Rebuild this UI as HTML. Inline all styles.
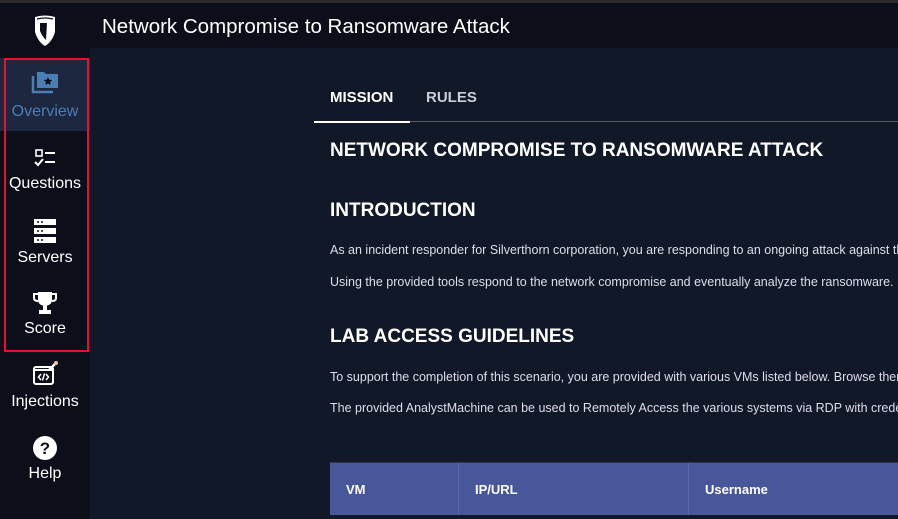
<!DOCTYPE html>
<html><head><meta charset="utf-8"><style>
*{margin:0;padding:0;box-sizing:border-box}
body{width:898px;height:519px;overflow:hidden;background:#111827;font-family:"Liberation Sans",Arial,sans-serif;color:#fff;position:relative}
.topline{position:absolute;left:0;top:0;width:898px;height:3px;background:#2b2b2e}
.side{position:absolute;left:0;top:3px;width:90px;height:516px;background:#0c0f1a}
.head{position:absolute;left:90px;top:3px;width:808px;height:45px;background:#0c0f1a}
.head span{position:absolute;left:12px;top:12px;font-size:20.5px;color:#fff}
.item{position:absolute;left:0;width:90px;text-align:center;font-size:16px;color:#fff}
.item svg{display:block;margin:0 auto 5px}
.ov{background:#1d2740;color:#4a7fb5}
.red{position:absolute;left:4px;top:58px;width:85px;height:294px;border:2px solid #e8112d}
.tabs{position:absolute;left:314px;top:88px;width:584px;height:34px;border-bottom:1px solid #555b66}
.tab{position:absolute;top:1px;font-size:15px;font-weight:bold}
.ul{position:absolute;left:0;bottom:-2px;width:96px;height:2px;background:#fff}
h1,h2{position:absolute;left:330px;font-size:19px;font-weight:bold}
p{position:absolute;left:330px;width:568px;overflow:hidden;font-size:12.5px;color:#dde;white-space:nowrap}
.tbl{position:absolute;left:330px;top:462px;width:568px;height:53px;background:#47579a;border-top:1px solid #2e3650;overflow:hidden}
.tbl div{position:absolute;top:0;height:53px;line-height:53px;font-size:13px;font-weight:bold;border-left:1px solid #5a68a5;padding-left:16px}
</style></head><body>
<div class="topline"></div>
<div class="side"></div>
<div class="head"><span>Network Compromise to Ransomware Attack</span></div>
<svg style="position:absolute;left:32px;top:14px" width="26" height="34" viewBox="0 0 26 34"><path d="M3 3 Q13 0 23 3 L23 18 Q20 28 13 32 Q6 28 3 18 Z" fill="#fff"/><path d="M8 9 L15 9 L14 26 Q10 22 8 17 Z" fill="#0c0f1a"/><path d="M5 5 Q13 3 21 5" stroke="#0c0f1a" stroke-width="1.2" fill="none"/></svg>
<div class="item ov" style="top:58px;height:73px;padding-top:12px"><svg width="28" height="24" viewBox="0 0 28 24"><path d="M2 6 V22 H22" stroke="#4a7fb5" stroke-width="2.5" fill="none"/><path d="M6 2 H13 L15 4 H27 V18 H6 Z" fill="#4a7fb5"/><path d="M17 7 l1.3 2.7 3 .3 -2.2 2 .6 3 -2.7-1.5 -2.7 1.5 .6-3 -2.2-2 3-.3z" fill="#0c0f1a"/></svg><span style="position:relative;top:4px">Overview</span></div>
<div class="item" style="top:148px"><svg width="24" height="22" viewBox="0 0 24 22"><rect x="3" y="2" width="6" height="6" fill="none" stroke="#fff" stroke-width="1.6"/><path d="M12 5 H22 M12 14 H22" stroke="#fff" stroke-width="2"/><path d="M2 14 L5 17 L10 11" stroke="#fff" stroke-width="2" fill="none"/></svg>Questions</div>
<div class="item" style="top:218px"><svg width="22" height="26" viewBox="0 0 22 26"><rect x="0" y="1" width="22" height="6" fill="#fff"/><rect x="0" y="10" width="22" height="6" fill="#fff"/><rect x="0" y="19" width="22" height="6" fill="#fff"/><path d="M3 4h2M7 4h2M3 13h2M7 13h2M3 22h2M7 22h2" stroke="#0c0f1a" stroke-width="1.5"/></svg>Servers</div>
<div class="item" style="top:291px"><svg width="24" height="24" viewBox="0 0 24 24"><path d="M5 1 H19 V9 Q19 14 12 15 Q5 14 5 9 Z" fill="#fff"/><path d="M5 3 H1 V7 Q1 10 5 10 M19 3 H23 V7 Q23 10 19 10" stroke="#fff" stroke-width="2" fill="none"/><rect x="10" y="14" width="4" height="5" fill="#fff"/><rect x="6" y="19" width="12" height="4" fill="#fff"/></svg>Score</div>
<div class="item" style="top:360px"><svg width="28" height="28" viewBox="0 0 28 28"><rect x="3" y="7" width="19" height="17" rx="2" fill="none" stroke="#fff" stroke-width="2"/><path d="M3 10 H22" stroke="#fff" stroke-width="2"/><path d="M10 14 L7.5 17 L10 20 M15 14 L17.5 17 L15 20 M13.5 13.5 L11.5 20.5" stroke="#fff" stroke-width="1.5" fill="none"/><path d="M18 10 L25 3" stroke="#fff" stroke-width="2.5"/><circle cx="25" cy="3" r="2" fill="#f0c0a0"/></svg>Injections</div>
<div class="item" style="top:436px"><svg width="24" height="24" viewBox="0 0 24 24"><circle cx="12" cy="12" r="12" fill="#fff"/><text x="12" y="18" font-family="Liberation Sans" font-weight="bold" font-size="17" text-anchor="middle" fill="#0c0f1a">?</text></svg>Help</div>
<div class="red"></div>
<div class="tabs"><span class="tab" style="left:16px">MISSION</span><span class="tab" style="left:112px;color:#ccd">RULES</span><div class="ul"></div></div>
<h1 style="top:140px">NETWORK COMPROMISE TO RANSOMWARE ATTACK</h1>
<h2 style="top:200px">INTRODUCTION</h2>
<p style="top:243px">As an incident responder for Silverthorn corporation, you are responding to an ongoing attack against the network.</p>
<p style="top:275px">Using the provided tools respond to the network compromise and eventually analyze the ransomware.</p>
<h2 style="top:326px">LAB ACCESS GUIDELINES</h2>
<p style="top:370px">To support the completion of this scenario, you are provided with various VMs listed below. Browse them.</p>
<p style="top:401px">The provided AnalystMachine can be used to Remotely Access the various systems via RDP with credentials.</p>
<div class="tbl"><div style="left:0;border-left:none">VM</div><div style="left:128px">IP/URL</div><div style="left:358px">Username</div></div>
</body></html>
